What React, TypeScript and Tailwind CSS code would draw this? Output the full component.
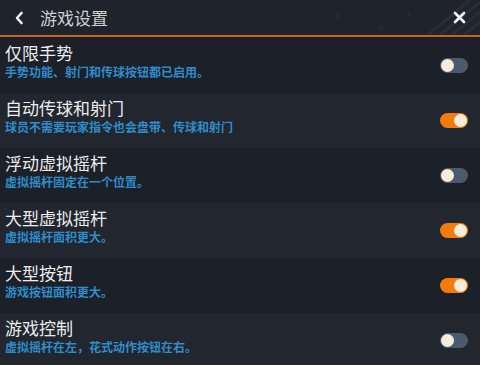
import { useState } from "react";

type Setting = { title: string; desc: string; on: boolean };

const SETTINGS: Setting[] = [
  { title: "仅限手势", desc: "手势功能、射门和传球按钮都已启用。", on: false },
  { title: "自动传球和射门", desc: "球员不需要玩家指令也会盘带、传球和射门", on: true },
  { title: "浮动虚拟摇杆", desc: "虚拟摇杆固定在一个位置。", on: false },
  { title: "大型虚拟摇杆", desc: "虚拟摇杆面积更大。", on: true },
  { title: "大型按钮", desc: "游戏按钮面积更大。", on: true },
  { title: "游戏控制", desc: "虚拟摇杆在左，花式动作按钮在右。", on: false },
];

function Toggle({ on, onClick }: { on: boolean; onClick: () => void }) {
  return (
    <button
      onClick={onClick}
      className={`flex h-[15px] w-[28px] items-center rounded-full px-[1px] ${
        on ? "justify-end bg-[#f47a0c]" : "justify-start bg-[#4b5b6e]"
      }`}
    >
      <span className="h-[13px] w-[13px] rounded-full bg-[#f6ecdc]" />
    </button>
  );
}

export default function App() {
  const [items, setItems] = useState(SETTINGS);
  const flip = (i: number) =>
    setItems((s) => s.map((it, j) => (j === i ? { ...it, on: !it.on } : it)));

  return (
    <div
      className="h-[365px] w-[480px] overflow-hidden bg-[#1e222a]"
      style={{ fontFamily: '"Noto Sans CJK SC", "Noto Sans", sans-serif' }}
    >
      <div className="relative flex h-[35px] items-center bg-[#1f232b]">
        <svg className="absolute right-0 top-0" width="150" height="35" viewBox="0 0 150 35">
          <g stroke="#2a2f38" strokeWidth="1">
            <path d="M-4 4h6M-1 1v6" transform="translate(80 10)" />
            <path d="M-4 4h6M-1 1v6" transform="translate(8 12)" />
            <path d="M-4 4h6M-1 1v6" transform="translate(52 24)" />
          </g>
          <g stroke="#282d36" strokeWidth="3">
            <path d="M110 35L150 2" />
            <path d="M122 35L150 12" />
            <path d="M134 35L150 22" />
            <path d="M98 35L140 0" />
          </g>
        </svg>
        <svg className="ml-[14px]" width="10" height="14" viewBox="0 0 10 14">
          <path d="M7.5 2L3 7l4.5 5" fill="none" stroke="#f2f2f2" strokeWidth="2.6" strokeLinecap="round" strokeLinejoin="round" />
        </svg>
        <span className="ml-[16px] text-[17px] leading-none text-[#cfd0d2]">游戏设置</span>
        <svg className="absolute right-[14px] top-[11px]" width="13" height="13" viewBox="0 0 13 13">
          <path d="M2 2l9 9M11 2l-9 9" stroke="#f4f4f4" strokeWidth="2.6" strokeLinecap="round" />
        </svg>
      </div>
      <div className="h-[2px] bg-[#c4661c]" />
      <div className="h-[1px] bg-[#14171c]" />

      {items.map((it, i) => (
        <div
          key={it.title}
          className={`flex h-[55px] items-start pl-[5px] pr-[12px] ${
            i % 2 === 0 ? "bg-[#1c2028]" : "bg-[#22262e]"
          }`}
        >
          <div className="flex flex-1 flex-col gap-[2px] pt-[5px]">
            <div className="text-[17px] leading-[19px] text-[#ededed]">{it.title}</div>
            <div className="text-[12px] font-bold leading-[15px] text-[#2f8dcb]">{it.desc}</div>
          </div>
          <div className="pt-[20px]">
            <Toggle on={it.on} onClick={() => flip(i)} />
          </div>
        </div>
      ))}
    </div>
  );
}
